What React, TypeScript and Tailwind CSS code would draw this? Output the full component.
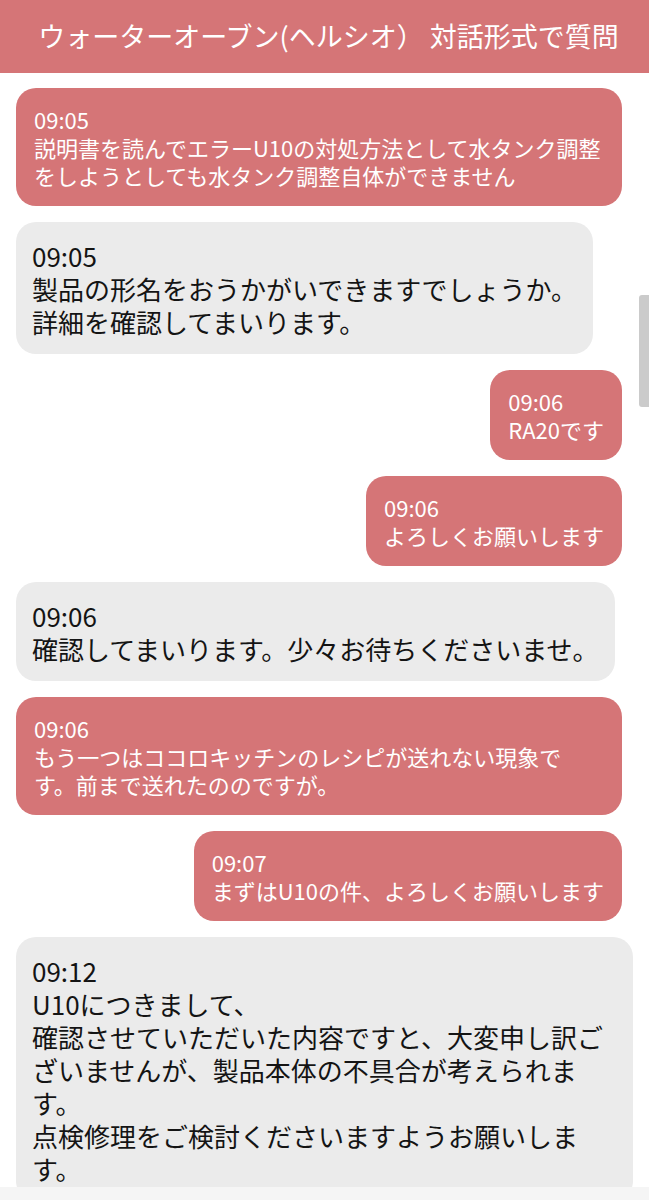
import React from 'react';

type Message = {
  mine: boolean;
  time: string;
  text: string;
  wide?: boolean;
};

const messages: Message[] = [
  {
    mine: true,
    time: '09:05',
    text: '説明書を読んでエラーU10の対処方法として水タンク調整をしようとしても水タンク調整自体ができません',
  },
  {
    mine: false,
    time: '09:05',
    text: '製品の形名をおうかがいできますでしょうか。\n詳細を確認してまいります。',
  },
  { mine: true, time: '09:06', text: 'RA20です' },
  { mine: true, time: '09:06', text: 'よろしくお願いします' },
  {
    mine: false,
    time: '09:06',
    text: '確認してまいります。少々お待ちくださいませ。',
  },
  {
    mine: true,
    wide: true,
    time: '09:06',
    text: 'もう一つはココロキッチンのレシピが送れない現象で\nす。前まで送れたののですが。',
  },
  { mine: true, time: '09:07', text: 'まずはU10の件、よろしくお願いします' },
  {
    mine: false,
    time: '09:12',
    text: 'U10につきまして、\n確認させていただいた内容ですと、大変申し訳ございませんが、製品本体の不具合が考えられます。\n点検修理をご検討くださいますようお願いします。',
  },
];

const Bubble = ({ mine, time, text, wide }: Message) => {
  if (mine) {
    return (
      <div className="flex justify-end pr-[27px]">
        <div
          className={`${
            wide ? 'w-[606px]' : 'w-fit max-w-[606px]'
          } rounded-[20px] bg-[#d57577] px-[18px] py-[17px] text-[22px] leading-[28px] text-white whitespace-pre-line`}
        >
          <div>{time}</div>
          <div>{text}</div>
        </div>
      </div>
    );
  }

  return (
    <div className="flex justify-start pl-4">
      <div className="w-fit max-w-[617px] rounded-[20px] bg-[#ebebeb] px-4 pt-[17px] pb-4 text-[26px] leading-[33px] text-[#141414] whitespace-pre-line">
        <div>{time}</div>
        <div>{text}</div>
      </div>
    </div>
  );
};

const App = () => {
  return (
    <div className="relative flex h-[1200px] w-full flex-col overflow-hidden bg-white font-['Noto_Sans_CJK_JP',sans-serif]">
      <div className="flex h-[73px] shrink-0 items-center justify-center bg-[#d57577] pl-2 text-[27px] text-white">
        ウォーターオーブン(ヘルシオ） 対話形式で質問
      </div>

      <div className="flex flex-1 flex-col gap-4 overflow-hidden pt-[15px]">
        {messages.map((m, i) => (
          <Bubble key={i} {...m} />
        ))}
      </div>

      <div className="h-[13px] shrink-0 bg-[#f5f5f5]" />

      {/* scrollbar thumb */}
      <div className="absolute right-0 top-[295px] h-[112px] w-[10px] rounded-l-[3px] bg-[#cbcbcb]" />
    </div>
  );
};

export default App;
